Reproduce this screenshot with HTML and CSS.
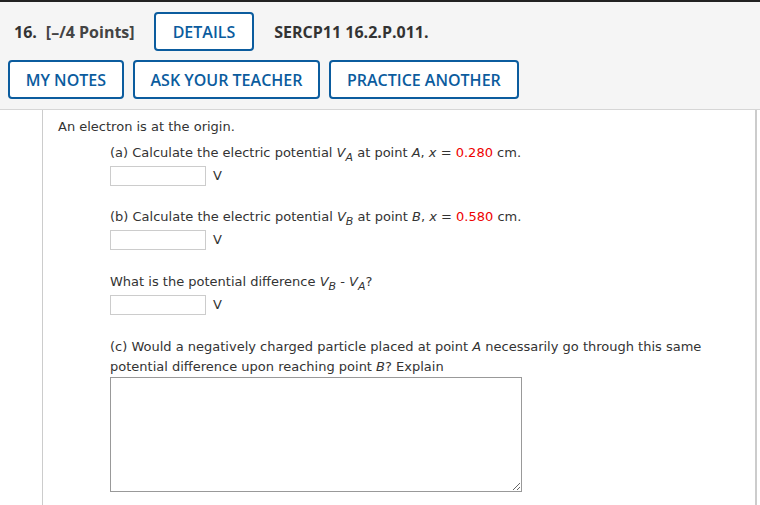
FILE: index.html
```html
<!DOCTYPE html>
<html lang="en">

<head>
    <meta charset="UTF-8">
    <meta name="viewport" content="width=device-width, initial-scale=1.0">
    <title>Question 16</title>
    <link rel="stylesheet" href="styles.css">
</head>

<body>
    <div class="page">
        <!-- Question header -->
        <div class="q-header">
            <div class="q-row">
                <span class="q-number">16.</span>
                <span class="q-points">[&ndash;/4 Points]</span>
                <button class="q-btn details-btn">DETAILS</button>
                <span class="q-code">SERCP11 16.2.P.011.</span>
            </div>
            <div class="q-row actions">
                <button class="q-btn">MY NOTES</button>
                <button class="q-btn">ASK YOUR TEACHER</button>
                <button class="q-btn">PRACTICE ANOTHER</button>
            </div>
        </div>

        <!-- Question body -->
        <div class="q-body">
            <p class="intro">An electron is at the origin.</p>

            <div class="part">
                <p>(a) Calculate the electric potential <i>V</i><sub>A</sub> at point <i>A</i>, <i>x</i> = <span class="val">0.280</span> cm.</p>
                <div class="answer"><input type="text"> <span>V</span></div>
            </div>

            <div class="part">
                <p>(b) Calculate the electric potential <i>V</i><sub>B</sub> at point <i>B</i>, <i>x</i> = <span class="val">0.580</span> cm.</p>
                <div class="answer"><input type="text"> <span>V</span></div>
            </div>

            <div class="part later">
                <p>What is the potential difference <i>V</i><sub>B</sub> - <i>V</i><sub>A</sub>?</p>
                <div class="answer"><input type="text"> <span>V</span></div>
            </div>

            <div class="part later">
                <p class="long">(c) Would a negatively charged particle placed at point <i>A</i> necessarily go through this same potential difference upon reaching point <i>B</i>? Explain</p>
                <textarea></textarea>
            </div>
        </div>
    </div>
</body>

</html>
```

FILE: styles.css
```css
/* Reset */
* {
    margin: 0;
    padding: 0;
    box-sizing: border-box;
}

body {
    background-color: #fff;
    font-family: "DejaVu Sans", Verdana, sans-serif;
    color: #333;
}

.page {
    border-top: 2px solid #222;
    height: 505px;
    overflow: hidden;
}

/* Header */
.q-header {
    background-color: #f5f5f5;
    border-bottom: 1px solid #d6d6d6;
    padding: 10px 0 10px 8px;
    font-family: "Open Sans", sans-serif;
}

.q-row {
    display: flex;
    align-items: center;
}

.q-row.actions {
    margin-top: 9px;
    gap: 9px;
}

.q-number {
    font-weight: 700;
    font-size: 16px;
    color: #333;
    margin-left: 6px;
}

.q-points {
    font-weight: 700;
    font-size: 16px;
    color: #444;
    margin-left: 9px;
}

.q-btn {
    font-family: "Open Sans", sans-serif;
    font-weight: 600;
    font-size: 16px;
    color: #0b5c9e;
    background-color: #fff;
    border: 2px solid #0b5c9e;
    border-radius: 4px;
    height: 39px;
    padding: 0 15.75px;
}

.details-btn {
    margin-left: 19px;
    padding: 0 17px;
}

.q-code {
    font-weight: 700;
    font-size: 16px;
    color: #333;
    margin-left: 20px;
}

/* Body */
.q-body {
    margin-left: 42px;
    width: 715px;
    border-left: 1px solid #ccc;
    border-right: 2px solid #ccc;
    padding: 7px 0 20px 15px;
    font-size: 13px;
    line-height: 20px;
    min-height: 400px;
}

.part {
    margin-left: 52px;
    margin-top: 6px;
}

.part + .part {
    margin-top: 21px;
}

.part.later {
    margin-top: 22px;
}

sub {
    font-style: italic;
    font-size: 11px;
    vertical-align: -4px;
    line-height: 0;
}

.val {
    color: #e00;
}

.answer {
    display: flex;
    align-items: center;
    gap: 7px;
    margin-top: 3px;
}

input[type="text"] {
    width: 96px;
    height: 20px;
    border: 1px solid #ccc;
    font-size: 13px;
}

.long {
    width: 600px;
}

textarea {
    display: block;
    width: 412px;
    height: 115px;
    border: 1px solid #999;
    resize: both;
}
```
